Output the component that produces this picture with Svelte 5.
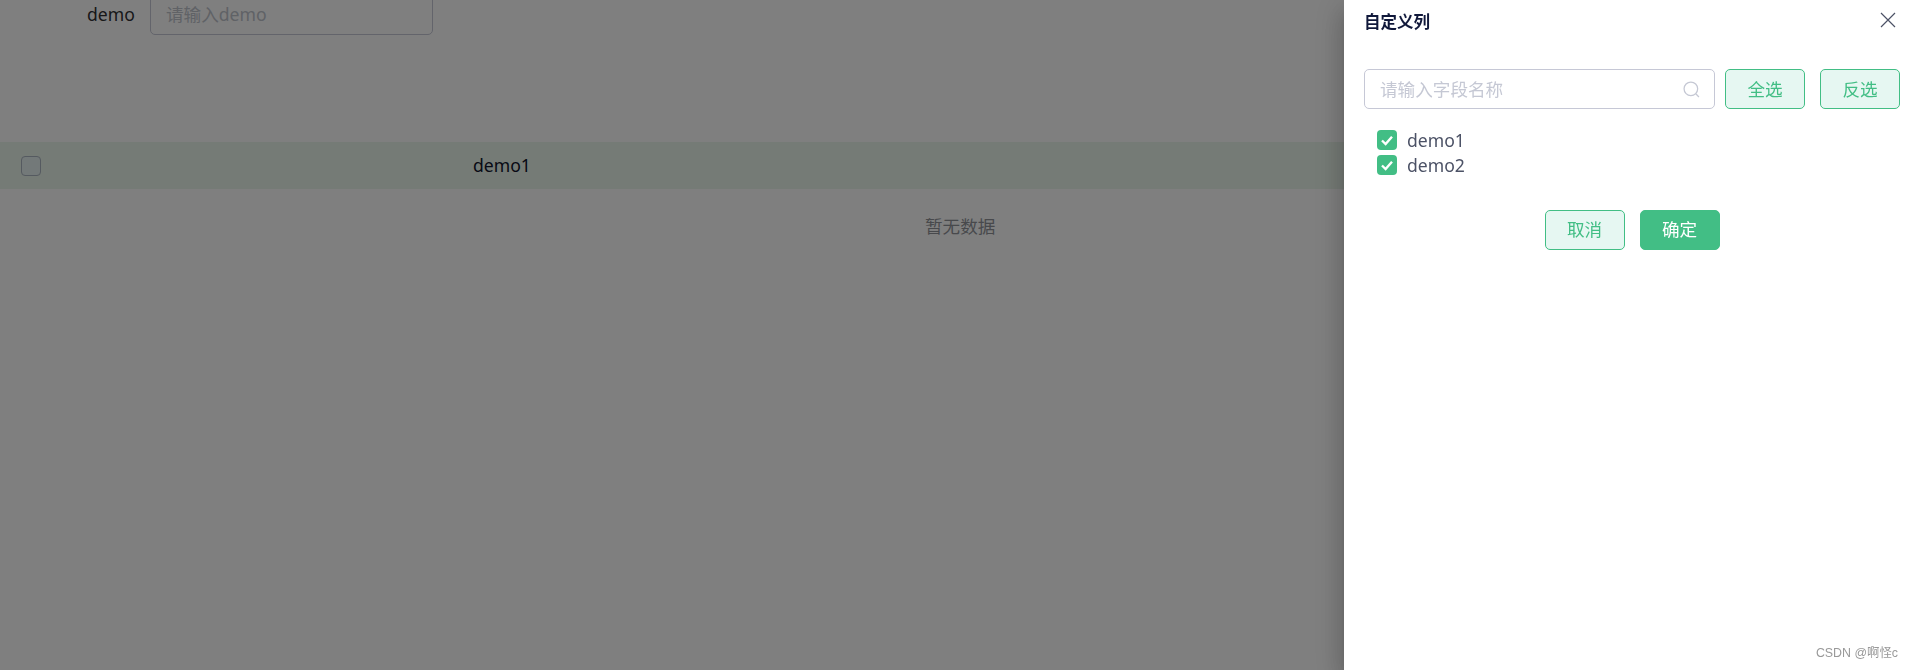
<script>
  const columns = ['demo1', 'demo2'];
</script>

<div class="page">
  <form class="search">
    <span class="label">demo</span>
    <div class="field"><span class="placeholder">请输入demo</span></div>
  </form>
  <div class="thead">
    <span class="cell-check"><span class="box"></span></span>
    <span class="cell-name">demo1</span>
  </div>
  <div class="empty">暂无数据</div>
</div>

<div class="mask"></div>

<aside class="drawer">
  <header class="head">
    <h2>自定义列</h2>
    <svg class="close" viewBox="0 0 16 16" aria-hidden="true"><path d="M1 1 15 15M15 1 1 15"/></svg>
  </header>
  <div class="tools">
    <div class="find">
      <span class="hint">请输入字段名称</span>
      <svg class="lens" viewBox="0 0 16 16" aria-hidden="true"><circle cx="7.4" cy="7.4" r="6.4"/><path d="M12 12l3 3"/></svg>
    </div>
    <button class="btn first">全选</button>
    <button class="btn second">反选</button>
  </div>
  <ul class="list">
    {#each columns as c}
      <li>
        <span class="tick"><svg viewBox="0 0 20 20" aria-hidden="true"><path d="M5 10.5 8.6 14 15 6.8"/></svg></span>
        <span>{c}</span>
      </li>
    {/each}
  </ul>
  <div class="foot">
    <button class="btn">取消</button>
    <button class="btn solid">确定</button>
  </div>
  <div class="mark">CSDN @啊怪c</div>
</aside>

<style>
  :global(body) {
    margin: 0;
    background: #fff;
    overflow: hidden;
    font-family: "Noto Sans", "Noto Sans CJK SC", sans-serif;
  }
  .page {
    height: 670px;
    overflow: hidden;
    font-size: 17.6px;
    color: #303133;
  }
  .search {
    display: flex;
    align-items: center;
    margin: -6px 0 0 87px;
    height: 40.5px;
    line-height: 38px;
  }
  .label { width: 63px; flex: none; }
  .field {
    box-sizing: border-box;
    width: 283px;
    height: 40.5px;
    border: 1px solid #c6c8d6;
    border-radius: 5px;
    padding-left: 15px;
    line-height: 39px;
    background: #fff;
  }
  .placeholder { color: #c0c4cc; }
  .thead {
    margin-top: 107.5px;
    height: 47px;
    background: #ebf6ec;
    display: flex;
    align-items: center;
    color: #10142a;
  }
  .cell-check { width: 473px; padding-left: 21px; box-sizing: border-box; display: flex; flex: none; }
  .cell-name { padding-bottom: 2px; }
  .box {
    box-sizing: border-box;
    width: 20px;
    height: 20px;
    border: 1px solid #aab4c0;
    border-radius: 4px;
    background: #e6f2f2;
  }
  .empty {
    margin: 0 0 0 925px;
    padding-top: 25px;
    line-height: 25px;
    color: #909399;
  }
  .mask {
    position: fixed;
    inset: 0;
    background: rgba(0, 0, 0, 0.5);
  }
  .drawer {
    position: fixed;
    top: 0;
    right: 0;
    bottom: 0;
    width: 568px;
    box-sizing: border-box;
    background: #fff;
    box-shadow: 0 8px 10px -5px rgba(0, 0, 0, 0.2), 0 16px 24px 2px rgba(0, 0, 0, 0.14), 0 6px 30px 5px rgba(0, 0, 0, 0.12);
    padding-left: 20px;
    display: flex;
    flex-direction: column;
    font-size: 17.6px;
    color: #4c5266;
  }
  .head {
    display: flex;
    justify-content: space-between;
    align-items: center;
    height: 41px;
    margin-bottom: 2px;
    padding-right: 16px;
  }
  h2 {
    margin: 2px 0 0;
    font-size: 16.5px;
    line-height: 24px;
    font-weight: 700;
    color: #10183a;
  }
  .close {
    width: 16px;
    height: 16px;
    margin-top: -2px;
    fill: none;
    stroke: #4c5266;
    stroke-width: 1.2;
  }
  .tools {
    display: flex;
    align-items: center;
    margin-top: 26px;
  }
  .find {
    box-sizing: border-box;
    width: 351px;
    height: 40px;
    border: 1px solid #c6c8d6;
    border-radius: 5px;
    padding: 0 7px 0 15px;
    display: flex;
    justify-content: space-between;
    align-items: center;
    line-height: 36px;
  }
  .hint { color: #c5c8d4; }
  .lens {
    width: 17px;
    height: 17px;
    margin-right: 7px;
    fill: none;
    stroke: #c5c8d4;
    stroke-width: 1.2;
  }
  .btn {
    box-sizing: border-box;
    width: 80px;
    height: 40px;
    padding: 0 0 2px;
    border: 1px solid #42be85;
    border-radius: 5px;
    background: #e6f7f2;
    color: #42be85;
    font: inherit;
  }
  .first { margin-left: 10px; }
  .second { margin-left: 15px; }
  .solid { background: #42be85; color: #fff; }
  .list {
    list-style: none;
    margin: 18.5px 0 0 13px;
    padding: 0;
  }
  .list li {
    display: flex;
    align-items: center;
    gap: 10px;
    height: 25px;
    line-height: 25px;
  }
  .tick {
    width: 20px;
    height: 20px;
    border-radius: 4px;
    background: #42be85;
    display: block;
  }
  .tick svg {
    display: block;
    width: 20px;
    height: 20px;
    fill: none;
    stroke: #fff;
    stroke-width: 2.4;
  }
  .foot {
    display: flex;
    justify-content: center;
    gap: 15px;
    margin-top: 32px;
    padding-right: 12px;
  }
  .mark {
    position: absolute;
    right: 14px;
    bottom: 9px;
    font-family: "Liberation Sans", "Noto Sans CJK SC", sans-serif;
    font-size: 12.4px;
    color: #999;
  }
</style>
